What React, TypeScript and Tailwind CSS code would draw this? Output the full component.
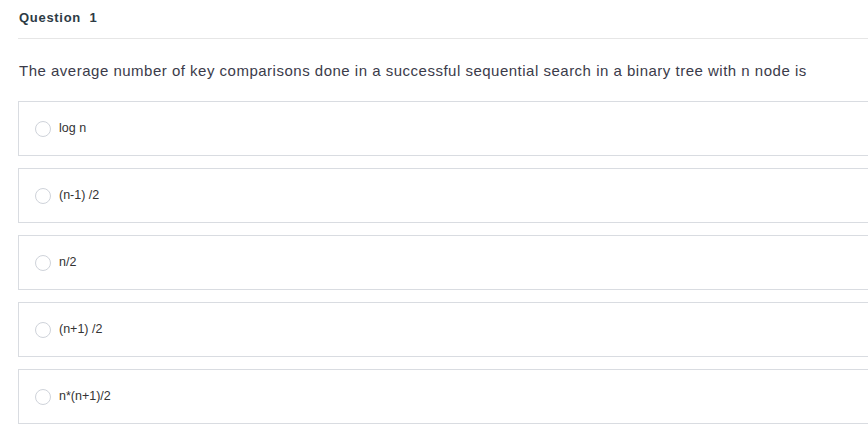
const options = ['log n', '(n-1) /2', 'n/2', '(n+1) /2', 'n*(n+1)/2']

export default function App() {
  return (
    <div
      className="h-[431px] w-[868px] overflow-hidden bg-white pl-[18px] text-[#333]"
      style={{ fontFamily: '"Liberation Sans", Arial, sans-serif' }}
    >
      <div className="-mr-1">
        <div className="flex h-[39px] items-center border-b border-[#e6e6e6] pl-px pb-[2px] text-[13px] font-bold tracking-[0.7px] text-[#2d3b45]">
          Question&nbsp; 1
        </div>
        <p className="pt-[22px] pl-px text-[15px] leading-[20px] tracking-[0.5px] text-[#3b3b4a]">
          The average number of key comparisons done in a successful sequential
          search in a binary tree with n node is
        </p>
        <div className="mt-[20px] flex flex-col gap-[12px]">
          {options.map((o) => (
            <label
              key={o}
              className="flex h-[55px] items-center gap-2 border border-[#d9dce1] pl-4"
            >
              <span className="h-4 w-4 rounded-full border border-[#cfd3da] bg-white" />
              <span className="text-[12.5px] text-[#333]">{o}</span>
            </label>
          ))}
        </div>
      </div>
    </div>
  )
}
